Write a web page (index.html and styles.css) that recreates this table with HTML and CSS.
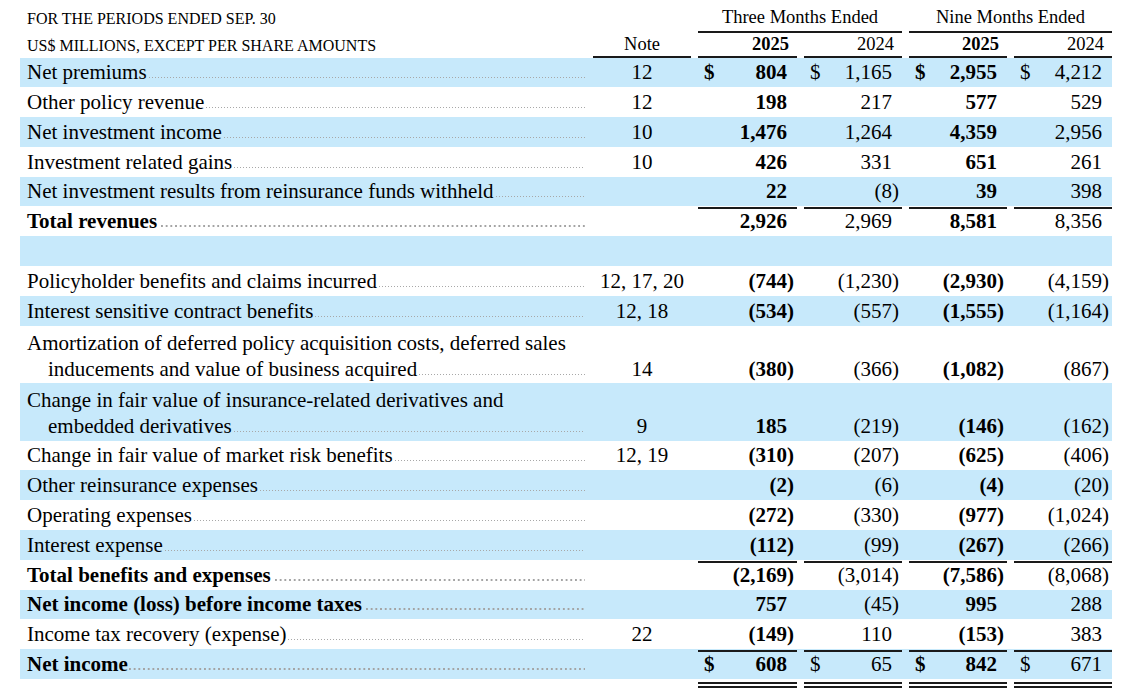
FILE: index.html
```html
<!DOCTYPE html>
<html lang="en">
<head>
<meta charset="utf-8">
<title>Statement of Income</title>
<link rel="stylesheet" href="styles.css">
</head>
<body>
<div class="grid head">
  <div class="title">FOR THE PERIODS ENDED SEP. 30<br>US$ MILLIONS, EXCEPT PER SHARE AMOUNTS</div>
  <div class="span three">Three Months Ended</div>
  <div class="span nine">Nine Months Ended</div>
  <div class="h note c2">Note</div>
  <div class="h b c3">2025</div>
  <div class="h c4">2024</div>
  <div class="h b c5">2025</div>
  <div class="h c6">2024</div>
</div>

<div class="grid row blue">
  <div class="lbl"><span>Net premiums</span><span class="dots"></span></div>
  <div class="note">12</div>
  <div class="num b"><span>$</span><span class="v p">804</span></div>
  <div class="num"><span>$</span><span class="v p">1,165</span></div>
  <div class="num b"><span>$</span><span class="v p">2,955</span></div>
  <div class="num"><span>$</span><span class="v p">4,212</span></div>
</div>
<div class="grid row">
  <div class="lbl"><span>Other policy revenue</span><span class="dots"></span></div>
  <div class="note">12</div>
  <div class="num b"><span class="v p">198</span></div>
  <div class="num"><span class="v p">217</span></div>
  <div class="num b"><span class="v p">577</span></div>
  <div class="num"><span class="v p">529</span></div>
</div>
<div class="grid row blue">
  <div class="lbl"><span>Net investment income</span><span class="dots"></span></div>
  <div class="note">10</div>
  <div class="num b"><span class="v p">1,476</span></div>
  <div class="num"><span class="v p">1,264</span></div>
  <div class="num b"><span class="v p">4,359</span></div>
  <div class="num"><span class="v p">2,956</span></div>
</div>
<div class="grid row">
  <div class="lbl"><span>Investment related gains</span><span class="dots"></span></div>
  <div class="note">10</div>
  <div class="num b"><span class="v p">426</span></div>
  <div class="num"><span class="v p">331</span></div>
  <div class="num b"><span class="v p">651</span></div>
  <div class="num"><span class="v p">261</span></div>
</div>
<div class="grid row blue">
  <div class="lbl"><span>Net investment results from reinsurance funds withheld</span><span class="dots"></span></div>
  <div class="note"></div>
  <div class="num b ul"><span class="v p">22</span></div>
  <div class="num ul"><span class="v">(8)</span></div>
  <div class="num b ul"><span class="v p">39</span></div>
  <div class="num ul"><span class="v p">398</span></div>
</div>
<div class="grid row">
  <div class="lbl b"><span>Total revenues</span><span class="dots dk"></span></div>
  <div class="note"></div>
  <div class="num b"><span class="v p">2,926</span></div>
  <div class="num"><span class="v p">2,969</span></div>
  <div class="num b"><span class="v p">8,581</span></div>
  <div class="num"><span class="v p">8,356</span></div>
</div>
<div class="grid row blue"></div>
<div class="grid row">
  <div class="lbl"><span>Policyholder benefits and claims incurred</span><span class="dots"></span></div>
  <div class="note">12, 17, 20</div>
  <div class="num b"><span class="v">(744)</span></div>
  <div class="num"><span class="v">(1,230)</span></div>
  <div class="num b"><span class="v">(2,930)</span></div>
  <div class="num"><span class="v">(4,159)</span></div>
</div>
<div class="grid row blue">
  <div class="lbl"><span>Interest sensitive contract benefits</span><span class="dots"></span></div>
  <div class="note">12, 18</div>
  <div class="num b"><span class="v">(534)</span></div>
  <div class="num"><span class="v">(557)</span></div>
  <div class="num b"><span class="v">(1,555)</span></div>
  <div class="num"><span class="v">(1,164)</span></div>
</div>
<div class="grid row two">
  <div class="lbl2">
    <div class="l1">Amortization of deferred policy acquisition costs, deferred sales</div>
    <div class="lbl ind"><span>inducements and value of business acquired</span><span class="dots"></span></div>
  </div>
  <div class="note">14</div>
  <div class="num b"><span class="v">(380)</span></div>
  <div class="num"><span class="v">(366)</span></div>
  <div class="num b"><span class="v">(1,082)</span></div>
  <div class="num"><span class="v">(867)</span></div>
</div>
<div class="grid row two blue">
  <div class="lbl2">
    <div class="l1">Change in fair value of insurance-related derivatives and</div>
    <div class="lbl ind"><span>embedded derivatives</span><span class="dots"></span></div>
  </div>
  <div class="note">9</div>
  <div class="num b"><span class="v p">185</span></div>
  <div class="num"><span class="v">(219)</span></div>
  <div class="num b"><span class="v">(146)</span></div>
  <div class="num"><span class="v">(162)</span></div>
</div>
<div class="grid row">
  <div class="lbl"><span>Change in fair value of market risk benefits</span><span class="dots"></span></div>
  <div class="note">12, 19</div>
  <div class="num b"><span class="v">(310)</span></div>
  <div class="num"><span class="v">(207)</span></div>
  <div class="num b"><span class="v">(625)</span></div>
  <div class="num"><span class="v">(406)</span></div>
</div>
<div class="grid row blue">
  <div class="lbl"><span>Other reinsurance expenses</span><span class="dots"></span></div>
  <div class="note"></div>
  <div class="num b"><span class="v">(2)</span></div>
  <div class="num"><span class="v">(6)</span></div>
  <div class="num b"><span class="v">(4)</span></div>
  <div class="num"><span class="v">(20)</span></div>
</div>
<div class="grid row">
  <div class="lbl"><span>Operating expenses</span><span class="dots"></span></div>
  <div class="note"></div>
  <div class="num b"><span class="v">(272)</span></div>
  <div class="num"><span class="v">(330)</span></div>
  <div class="num b"><span class="v">(977)</span></div>
  <div class="num"><span class="v">(1,024)</span></div>
</div>
<div class="grid row blue">
  <div class="lbl"><span>Interest expense</span><span class="dots"></span></div>
  <div class="note"></div>
  <div class="num b ul"><span class="v">(112)</span></div>
  <div class="num ul"><span class="v">(99)</span></div>
  <div class="num b ul"><span class="v">(267)</span></div>
  <div class="num ul"><span class="v">(266)</span></div>
</div>
<div class="grid row">
  <div class="lbl b"><span>Total benefits and expenses</span><span class="dots dk"></span></div>
  <div class="note"></div>
  <div class="num b"><span class="v">(2,169)</span></div>
  <div class="num"><span class="v">(3,014)</span></div>
  <div class="num b"><span class="v">(7,586)</span></div>
  <div class="num"><span class="v">(8,068)</span></div>
</div>
<div class="grid row blue">
  <div class="lbl b"><span>Net income (loss) before income taxes</span><span class="dots dk"></span></div>
  <div class="note"></div>
  <div class="num b"><span class="v p">757</span></div>
  <div class="num"><span class="v">(45)</span></div>
  <div class="num b"><span class="v p">995</span></div>
  <div class="num"><span class="v p">288</span></div>
</div>
<div class="grid row">
  <div class="lbl"><span>Income tax recovery (expense)</span><span class="dots"></span></div>
  <div class="note">22</div>
  <div class="num b ul"><span class="v">(149)</span></div>
  <div class="num ul"><span class="v p">110</span></div>
  <div class="num b ul"><span class="v">(153)</span></div>
  <div class="num ul"><span class="v p">383</span></div>
</div>
<div class="grid row blue">
  <div class="lbl b"><span>Net income</span><span class="dots dk tight"></span></div>
  <div class="note"></div>
  <div class="num b"><span>$</span><span class="v p">608</span></div>
  <div class="num"><span>$</span><span class="v p">65</span></div>
  <div class="num b"><span>$</span><span class="v p">842</span></div>
  <div class="num"><span>$</span><span class="v p">671</span></div>
</div>
<div class="grid dbl">
  <div class="c c3"></div>
  <div class="c c4"></div>
  <div class="c c5"></div>
  <div class="c c6"></div>
</div>
</body>
</html>
```
FILE: styles.css
```css
* {
  box-sizing: border-box;
  margin: 0;
  padding: 0;
}
html, body {
  background: #fff;
}
body {
  font-family: "Liberation Serif", "Times New Roman", serif;
  color: #000;
  padding-left: 20px;
  width: 1112px;
}
.grid {
  display: grid;
  grid-template-columns: 566px 98px 99px 98px 98px 98px;
  column-gap: 7px;
}
.c2 { grid-column: 2; }
.c3 { grid-column: 3; }
.c4 { grid-column: 4; }
.c5 { grid-column: 5; }
.c6 { grid-column: 6; }

/* header */
.head {
  grid-template-rows: 32.5px 25px;
  font-size: 18.5px;
}
.head .title {
  grid-row: 1 / 3;
  grid-column: 1;
  font-size: 16px;
  line-height: 27px;
  padding: 4.5px 0 0 7px;
  white-space: nowrap;
}
.head .span {
  grid-row: 1;
  text-align: center;
  line-height: 28px;
  padding-top: 2.5px;
  border-bottom: 2px solid #1a1a1a;
}
.span.three { grid-column: 3 / 5; }
.span.nine { grid-column: 5 / 7; }
.head .h {
  grid-row: 2;
  line-height: 21.5px;
  padding: 1.5px 8px 0 0;
  text-align: right;
  border-bottom: 2px solid #1a1a1a;
}
.head .h.note {
  text-align: center;
  padding-right: 0;
}

/* body rows */
.row {
  height: 29.8px;
  line-height: 29.8px;
  font-size: 21px;
  padding-top: 0.8px;
}
.row.blue {
  background: #c7e9fb;
}
.row.two {
  height: 57.5px;
  line-height: 26px;
  align-items: end;
  padding-top: 0;
  padding-bottom: 1.5px;
}
.lbl {
  display: flex;
  align-items: baseline;
  padding-left: 7px;
  white-space: nowrap;
}
.lbl2 {
  padding-left: 7px;
  white-space: nowrap;
}
.lbl2 .lbl.ind {
  padding-left: 21px;
}
.dots {
  flex: 1;
  height: 2px;
  margin-left: 2px;
  margin-right: 1px;
  background: linear-gradient(to right, #a8a8a8 1px, transparent 1px) 0 0 / 3px 1px repeat-x;
}
.dots.dk {
  height: 3px;
  margin-left: 4px;
  background: linear-gradient(to right, #a4a4a4 2px, transparent 2px) 0 0 / 4.7px 2px repeat-x;
}
.dots.dk.tight {
  margin-left: 1px;
}
.b {
  font-weight: bold;
}
.note {
  text-align: center;
}
.num {
  display: flex;
  padding: 0 3px 0 6px;
}
.num .v {
  margin-left: auto;
}
.num .p {
  padding-right: 0.333em;
}
.ul {
  border-bottom: 2px solid #1a1a1a;
}

/* double rule below net income */
.dbl {
  height: 10px;
}
.dbl .c {
  margin-top: 3px;
  border-top: 6px double #1a1a1a;
}
```
